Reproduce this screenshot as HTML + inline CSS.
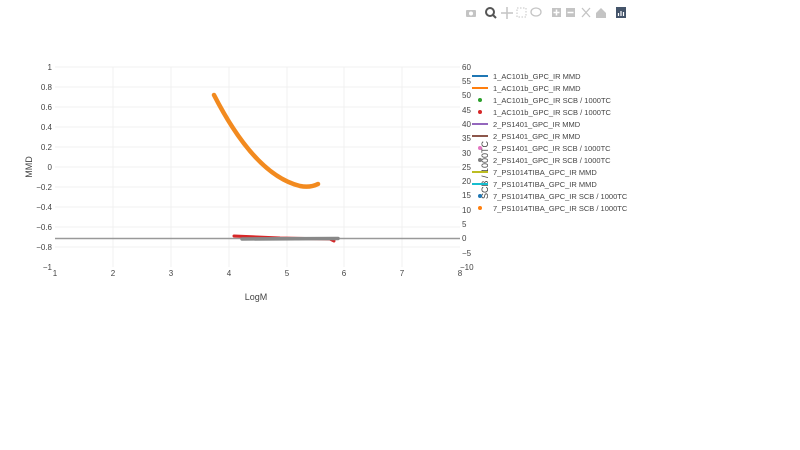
<!DOCTYPE html>
<html><head><style>
html,body{margin:0;padding:0;background:#fff;width:800px;height:450px;overflow:hidden}
svg text{font-family:"Liberation Sans",sans-serif;fill:#444}
</style></head><body>
<svg width="800" height="450" viewBox="0 0 800 450" xmlns="http://www.w3.org/2000/svg">
<g stroke="#f1f1f1" stroke-width="1">
<line x1="113" y1="67" x2="113" y2="267"/><line x1="171" y1="67" x2="171" y2="267"/>
<line x1="229" y1="67" x2="229" y2="267"/><line x1="287" y1="67" x2="287" y2="267"/>
<line x1="344" y1="67" x2="344" y2="267"/><line x1="402" y1="67" x2="402" y2="267"/>
<line x1="55" y1="67" x2="460" y2="67"/><line x1="55" y1="87" x2="460" y2="87"/>
<line x1="55" y1="107" x2="460" y2="107"/><line x1="55" y1="127" x2="460" y2="127"/>
<line x1="55" y1="147" x2="460" y2="147"/><line x1="55" y1="167" x2="460" y2="167"/>
<line x1="55" y1="187" x2="460" y2="187"/><line x1="55" y1="207" x2="460" y2="207"/>
<line x1="55" y1="227" x2="460" y2="227"/><line x1="55" y1="247" x2="460" y2="247"/>
</g>
<g font-size="8" text-anchor="end">
<text x="52" y="70">1</text><text x="52" y="90">0.8</text><text x="52" y="110">0.6</text>
<text x="52" y="130">0.4</text><text x="52" y="150">0.2</text><text x="52" y="170">0</text>
<text x="52" y="190">−0.2</text><text x="52" y="210">−0.4</text><text x="52" y="230">−0.6</text>
<text x="52" y="250">−0.8</text><text x="52" y="270">−1</text>
</g>
<g font-size="8" text-anchor="middle">
<text x="55" y="276">1</text><text x="113" y="276">2</text><text x="171" y="276">3</text>
<text x="229" y="276">4</text><text x="287" y="276">5</text><text x="344" y="276">6</text>
<text x="402" y="276">7</text><text x="460" y="276">8</text>
</g>
<g font-size="8" text-anchor="start">
<text x="462" y="70">60</text><text x="462" y="84">55</text><text x="462" y="98">50</text>
<text x="462" y="113">45</text><text x="462" y="127">40</text><text x="462" y="141">35</text>
<text x="462" y="156">30</text><text x="462" y="170">25</text><text x="462" y="184">20</text>
<text x="462" y="198">15</text><text x="462" y="213">10</text><text x="462" y="227">5</text>
<text x="462" y="241">0</text><text x="462" y="256">−5</text><text x="460" y="270">−10</text>
</g>
<text x="256" y="300" font-size="9" text-anchor="middle">LogM</text>
<text transform="translate(32,167) rotate(-90)" font-size="9" text-anchor="middle">MMD</text>
<text transform="translate(488,170) rotate(-90)" font-size="9" text-anchor="middle">SCB / 1000TC</text>
<line x1="55" y1="238.5" x2="460" y2="238.5" stroke="#999" stroke-width="1.5"/>
<path d="M234,236 L280,238 L330,239 L334,241" stroke="#d62728" stroke-width="3" fill="none" stroke-linecap="round"/>
<path d="M242,239 L338,238.5" stroke="#888" stroke-width="3.5" fill="none" stroke-linecap="round"/>
<path d="M214,95 Q255,175 300,186 Q310,188 318,184" stroke="#f28a1f" stroke-width="4.5" fill="none" stroke-linecap="round"/>
<g font-size="7.5" style="fill:#444">
<line x1="472" y1="76" x2="488" y2="76" stroke="#1f77b4" stroke-width="2"/><text x="493" y="79">1_AC101b_GPC_IR MMD</text>
<line x1="472" y1="88" x2="488" y2="88" stroke="#ff7f0e" stroke-width="2"/><text x="493" y="91">1_AC101b_GPC_IR MMD</text>
<circle cx="480" cy="100" r="2" fill="#2ca02c"/><text x="493" y="103">1_AC101b_GPC_IR SCB / 1000TC</text>
<circle cx="480" cy="112" r="2" fill="#d62728"/><text x="493" y="115">1_AC101b_GPC_IR SCB / 1000TC</text>
<line x1="472" y1="124" x2="488" y2="124" stroke="#9467bd" stroke-width="2"/><text x="493" y="127">2_PS1401_GPC_IR MMD</text>
<line x1="472" y1="136" x2="488" y2="136" stroke="#8c564b" stroke-width="2"/><text x="493" y="139">2_PS1401_GPC_IR MMD</text>
<circle cx="480" cy="148" r="2" fill="#e377c2"/><text x="493" y="151">2_PS1401_GPC_IR SCB / 1000TC</text>
<circle cx="480" cy="160" r="2" fill="#7f7f7f"/><text x="493" y="163">2_PS1401_GPC_IR SCB / 1000TC</text>
<line x1="472" y1="172" x2="488" y2="172" stroke="#bcbd22" stroke-width="2"/><text x="493" y="175">7_PS1014TIBA_GPC_IR MMD</text>
<line x1="472" y1="184" x2="488" y2="184" stroke="#17becf" stroke-width="2"/><text x="493" y="187">7_PS1014TIBA_GPC_IR MMD</text>
<circle cx="480" cy="196" r="2" fill="#1f77b4"/><text x="493" y="199">7_PS1014TIBA_GPC_IR SCB / 1000TC</text>
<circle cx="480" cy="208" r="2" fill="#ff7f0e"/><text x="493" y="211">7_PS1014TIBA_GPC_IR SCB / 1000TC</text>
</g>
<g fill="#c4c4c4" stroke="none">
<rect x="466" y="10" width="10" height="7" rx="1"/><circle cx="471" cy="13.5" r="2" fill="#fff"/>
<circle cx="490" cy="12" r="4" fill="none" stroke="#555" stroke-width="2"/><line x1="493" y1="15" x2="496" y2="18" stroke="#555" stroke-width="2"/>
<path d="M507,7v12M501,13h12" stroke="#c4c4c4" stroke-width="1.5"/>
<rect x="517" y="8" width="9" height="9" fill="none" stroke="#c4c4c4" stroke-dasharray="1.5 1.5"/>
<ellipse cx="536" cy="12" rx="5" ry="4" fill="none" stroke="#c4c4c4" stroke-width="1.3"/>
<rect x="552" y="8" width="9" height="9"/><path d="M553.5,12.5h6M556.5,9.5v6" stroke="#fff" stroke-width="1.5"/>
<rect x="566" y="8" width="9" height="9"/><path d="M567.5,12.5h6" stroke="#fff" stroke-width="1.5"/>
<path d="M582,8l8,9M590,8l-8,9" stroke="#c4c4c4" stroke-width="1.3"/>
<path d="M596,13l5,-5l5,5v5h-10z"/>
<rect x="616" y="7" width="10" height="11" fill="#44546a"/>
<path d="M618.5,16v-3M621,16v-5M623.5,16v-4" stroke="#fff" stroke-width="1.2"/>
</g>
</svg>
</body></html>
